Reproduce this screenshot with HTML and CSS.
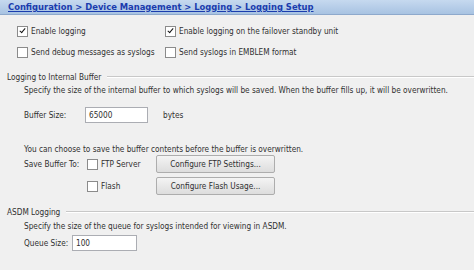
FILE: index.html
```html
<!DOCTYPE html>
<html>
<head>
<meta charset="utf-8">
<link rel="stylesheet" href="styles.css">
</head>
<body>
<div class="header"><a class="crumb">Configuration &gt; Device Management &gt; Logging &gt; Logging Setup</a></div>
<div class="opts">
  <label class="chk"><span class="box checked"></span>Enable logging</label>
  <label class="chk"><span class="box checked"></span>Enable logging on the failover standby unit</label>
  <label class="chk"><span class="box"></span>Send debug messages as syslogs</label>
  <label class="chk"><span class="box"></span>Send syslogs in EMBLEM format</label>
</div>
<div class="section s1">
  <div class="legend"><span>Logging to Internal Buffer</span><span class="rule"></span></div>
  <div class="body">
    <div class="text t1">Specify the size of the internal buffer to which syslogs will be saved. When the buffer fills up, it will be overwritten.</div>
    <div class="row buf"><span class="lbl lbl-buf">Buffer Size:</span><span class="input in-buf">65000</span><span class="unit">bytes</span></div>
    <div class="text t2">You can choose to save the buffer contents before the buffer is overwritten.</div>
    <div class="row save">
      <span class="lbl lbl-save">Save Buffer To:</span>
      <label class="chk chk-col"><span class="box"></span>FTP Server</label>
      <span class="btn">Configure FTP Settings...</span>
    </div>
    <div class="row flash">
      <span class="lbl lbl-save"></span>
      <label class="chk chk-col"><span class="box"></span>Flash</label>
      <span class="btn">Configure Flash Usage...</span>
    </div>
  </div>
</div>
<div class="section s2">
  <div class="legend"><span>ASDM Logging</span><span class="rule"></span></div>
  <div class="body">
    <div class="text t3">Specify the size of the queue for syslogs intended for viewing in ASDM.</div>
    <div class="row queue"><span class="lbl lbl-q">Queue Size:</span><span class="input in-q">100</span></div>
  </div>
</div>
</body>
</html>
```
FILE: styles.css
```css
html, body {
  margin: 0;
  padding: 0;
}
body {
  background: #f0f0f0;
  font-family: "DejaVu Sans Condensed", "DejaVu Sans", sans-serif;
  font-size: 8.2px;
  color: #303030;
  width: 474px;
  height: 270px;
  overflow: hidden;
}
.header {
  height: 14px;
  line-height: 14px;
  padding-left: 8px;
  background: linear-gradient(#c6d9ef, #a8c3e2);
  border-bottom: 1px solid #8ea9cc;
}
.crumb {
  font-family: "DejaVu Sans", sans-serif;
  font-size: 8.4px;
  color: #1a3cae;
  font-weight: bold;
  text-decoration: underline;
}
.opts {
  display: grid;
  grid-template-columns: 148px auto;
  row-gap: 7px;
  padding-left: 17px;
  margin-top: 9px;
}
.chk {
  display: flex;
  align-items: center;
  height: 14px;
  gap: 3px;
}
.box {
  width: 9px;
  height: 9px;
  border: 1px solid #8b8b8b;
  background: #fff;
  position: relative;
  flex: none;
}
.box.checked::after {
  content: "";
  position: absolute;
  left: 3px;
  top: 0px;
  width: 2px;
  height: 5px;
  border: solid #111;
  border-width: 0 1.6px 1.6px 0;
  transform: rotate(40deg);
}
.section { margin-top: 12px; }
.s2 { margin-top: 11px; }
.legend {
  display: flex;
  align-items: center;
  height: 12px;
  padding-left: 7px;
  gap: 6px;
}
.rule {
  flex: 1;
  height: 0;
  border-top: 1px solid #c8c8c8;
  border-bottom: 1px solid #fff;
}
.body { padding-left: 24px; }
.text { height: 12px; line-height: 12px; }
.t1 { margin-top: 1px; }
.t2 { margin-top: 20px; }
.t3 { margin-top: 2px; }
.row { display: flex; align-items: center; }
.buf { margin-top: 11px; height: 16px; }
.save { height: 18px; }
.flash { margin-top: 4px; height: 18px; }
.queue { margin-top: 3px; height: 16px; }
.lbl-buf { width: 61px; }
.lbl-save { width: 63px; flex: none; }
.lbl-q { width: 48px; }
.input {
  box-sizing: border-box;
  height: 16px;
  line-height: 14px;
  border: 1px solid #abadb3;
  background: #fff;
  padding-left: 3px;
}
.in-buf { width: 63px; }
.in-q { width: 65px; }
.unit { margin-left: 15px; }
.chk-col { width: 69px; flex: none; }
.btn {
  box-sizing: border-box;
  width: 119px;
  height: 18px;
  line-height: 16px;
  text-align: center;
  border: 1px solid #adadad;
  border-radius: 2px;
  background: linear-gradient(#f4f4f4, #dddddd);
}
```
